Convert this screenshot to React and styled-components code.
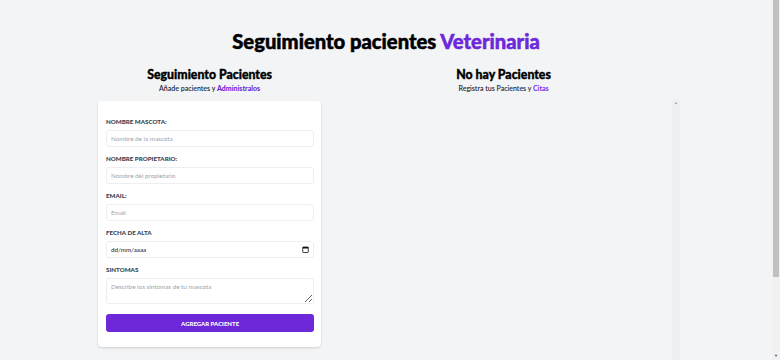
import styled, { createGlobalStyle } from 'styled-components';

const GlobalStyle = createGlobalStyle`
   * {
      box-sizing: border-box;
   }
   body {
      margin: 0;
      padding-right: 8px;
      background-color: #f3f4f6;
      font-family: Lato, "Noto Sans", sans-serif;
      color: #111827;
   }
`;

const fields = [
   { id: 'mascota', label: 'Nombre Mascota:', placeholder: 'Nombre de la mascota' },
   { id: 'propietario', label: 'Nombre Propietario:', placeholder: 'Nombre del propietario' },
   { id: 'email', label: 'Email:', placeholder: 'Email' },
];

function CalendarIcon() {
   return (
      <svg width="7" height="7" viewBox="0 0 14 14" fill="none">
         <rect x="1.5" y="2" width="11" height="11" rx="1" stroke="#111" strokeWidth="1.6" />
         <rect x="1.5" y="2" width="11" height="3" fill="#111" />
      </svg>
   );
}

function App() {
   return (
      <>
         <GlobalStyle />
         <PageScrollbar>
            <Thumb />
            <ArrowDown>▼</ArrowDown>
         </PageScrollbar>
         <Container>
            <Title>
               Seguimiento pacientes <Accent>Veterinaria</Accent>
            </Title>
            <Columns>
               <FormColumn>
                  <SubTitle>Seguimiento Pacientes</SubTitle>
                  <Lead>
                     Añade pacientes y <LeadAccent>Administralos</LeadAccent>
                  </Lead>
                  <Card>
                     {fields.map((field) => (
                        <Field key={field.id}>
                           <Label htmlFor={field.id}>{field.label}</Label>
                           <Input id={field.id} type="text" placeholder={field.placeholder} />
                        </Field>
                     ))}
                     <Field>
                        <Label htmlFor="alta">Fecha de alta</Label>
                        <DateBox>
                           <Input id="alta" type="text" placeholder="dd/mm/aaaa" $dark />
                           <DateIcon>
                              <CalendarIcon />
                           </DateIcon>
                        </DateBox>
                     </Field>
                     <Field>
                        <Label htmlFor="sintomas">Sintomas</Label>
                        <TextArea id="sintomas" placeholder="Describe los sintomas de tu mascota" />
                     </Field>
                     <Submit type="button">Agregar paciente</Submit>
                  </Card>
               </FormColumn>
               <ListColumn>
                  <SubTitle>No hay Pacientes</SubTitle>
                  <Lead>
                     Registra tus Pacientes y <LeadAccent $light>Citas</LeadAccent>
                  </Lead>
                  <ScrollArea>
                     <ScrollTrack>
                        <ArrowUp>▲</ArrowUp>
                     </ScrollTrack>
                  </ScrollArea>
               </ListColumn>
            </Columns>
         </Container>
      </>
   );
}

export default App;

const PageScrollbar = styled.div`
   position: fixed;
   top: 0;
   right: 0;
   width: 8px;
   height: 100vh;
   background: #f1f1f1;
`;

const Thumb = styled.div`
   margin: 0 1px;
   height: 277px;
   background: #c1c1c1;
`;

const ArrowDown = styled.span`
   position: absolute;
   bottom: 2px;
   left: 2px;
   font-size: 4px;
   color: #505050;
`;

const Container = styled.div`
   width: 588px;
   margin: 0 auto;
   padding-top: 27px;
`;

const Title = styled.h1`
   margin: 0;
   text-align: center;
   font-size: 20.2px;
   line-height: 28px;
   font-weight: 900;
   color: #000;
   -webkit-text-stroke: 0.5px currentColor;
`;

const Accent = styled.span`
   color: #6d28d9;
`;

const Columns = styled.div`
   display: flex;
   margin-top: 11px;
`;

const FormColumn = styled.div`
   width: 40%;
   padding: 0 6px;
`;

const ListColumn = styled.div`
   width: 60%;
`;

const SubTitle = styled.h2`
   margin: 0;
   text-align: center;
   font-size: 12.3px;
   line-height: 17px;
   font-weight: 900;
   color: #000;
   -webkit-text-stroke: 0.35px currentColor;
`;

const Lead = styled.p`
   margin: 0;
   text-align: center;
   font-size: 7px;
   line-height: 10px;
   font-weight: 600;
   color: #1f2937;
`;

const LeadAccent = styled.span`
   font-weight: 900;
   color: ${(p) => (p.$light ? '#7c3aed' : '#6d28d9')};
`;

const Card = styled.form`
   margin-top: 8px;
   background: #fff;
   border-radius: 4px;
   box-shadow: 0 1px 3px rgba(0, 0, 0, 0.1), 0 1px 2px rgba(0, 0, 0, 0.06);
   padding: 16px 7px 15px 8px;
`;

const Field = styled.div`
   margin-bottom: 7px;
`;

const Label = styled.label`
   display: block;
   font-size: 6.2px;
   line-height: 10px;
   font-weight: 900;
   text-transform: uppercase;
   color: #374151;
`;

const Input = styled.input`
   display: block;
   width: 100%;
   height: 17px;
   margin-top: 3px;
   padding: 0 4px;
   border: 1px solid #eceef1;
   border-radius: 3px;
   font-family: Lato, sans-serif;
   font-size: 6.3px;
   color: #111827;
   outline: none;

   &::placeholder {
      color: ${(p) => (p.$dark ? '#111827' : '#9ca3af')};
   }
`;

const DateBox = styled.div`
   position: relative;
`;

const DateIcon = styled.span`
   position: absolute;
   right: 5px;
   top: 5px;
   display: flex;
`;

const TextArea = styled.textarea`
   display: block;
   width: 100%;
   height: 26px;
   margin-top: 3px;
   padding: 4px;
   border: 1px solid #eceef1;
   border-radius: 3px;
   font-family: Lato, sans-serif;
   font-size: 6.3px;
   color: #111827;
   outline: none;

   &::placeholder {
      color: #9ca3af;
   }
`;

const Submit = styled.button`
   display: block;
   width: 100%;
   height: 18px;
   margin-top: 10px;
   border: none;
   border-radius: 3px;
   background: #6d28d9;
   color: #fff;
   font-family: Lato, sans-serif;
   font-size: 6px;
   font-weight: 900;
   text-transform: uppercase;
   cursor: pointer;
`;

const ScrollArea = styled.div`
   display: flex;
   justify-content: flex-end;
   height: 100vh;
   margin-top: 6px;
`;

const ScrollTrack = styled.div`
   position: relative;
   width: 8px;
   background: #eff0f3;
`;

const ArrowUp = styled.span`
   position: absolute;
   top: 1px;
   left: 2px;
   font-size: 4px;
   color: #a3a3a3;
`;
